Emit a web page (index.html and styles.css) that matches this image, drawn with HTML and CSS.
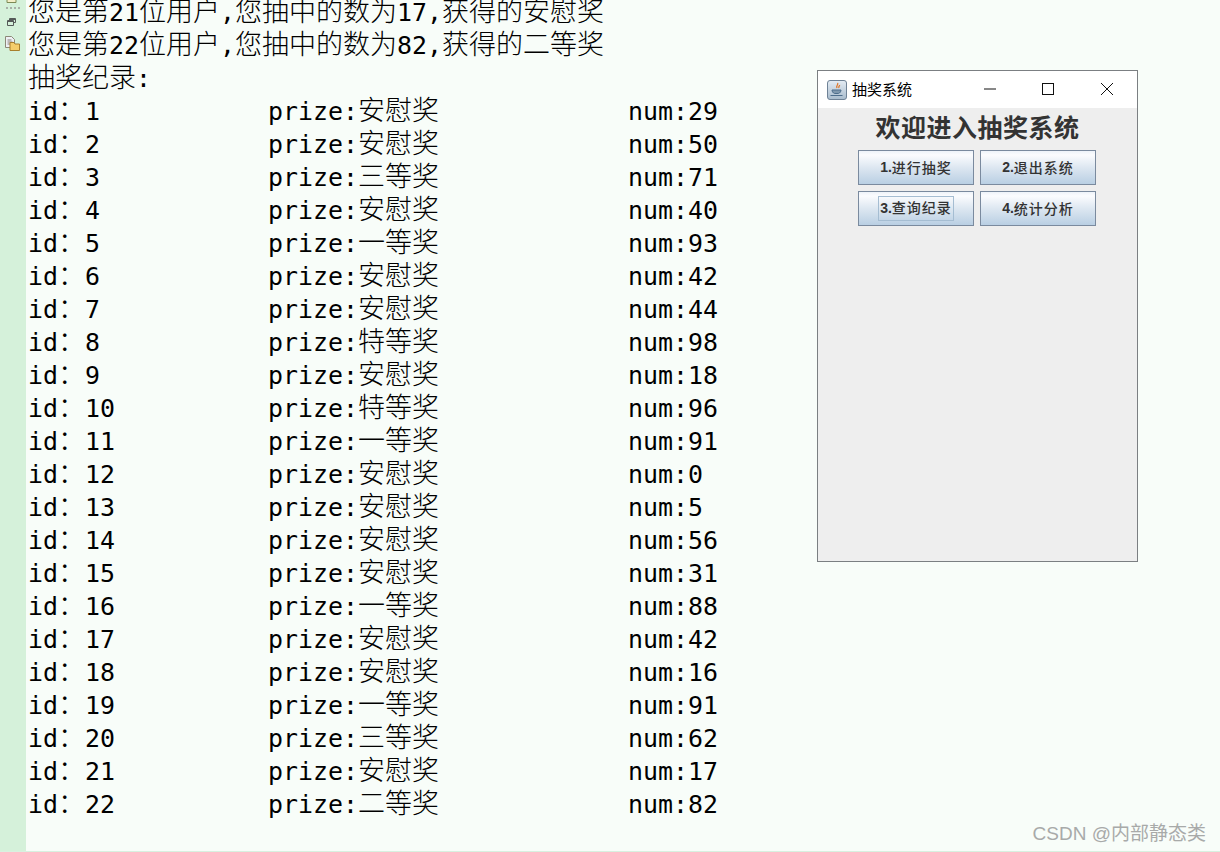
FILE: index.html
```html
<!DOCTYPE html>
<html lang="zh-CN">
<head>
<meta charset="utf-8">
<title>抽奖系统</title>
<link rel="stylesheet" href="styles.css">
</head>
<body>
<div class="page">
  <aside class="gutter">
    <svg class="gicon top" width="14" height="4" viewBox="0 0 14 4"><path d="M2 0v2.500h9V0" fill="#f3efc8" stroke="#7d8a55"/></svg>
    <div class="dots"></div>
    <svg class="gicon restore" width="9" height="8" viewBox="0 0 9 8"><path d="M2.500 2V.5h6v4H6.500M.5 2.500h6v5h-6zM.5 3.500h6M2.500 1.500h6" fill="none" stroke="#555a58"/></svg>
    <svg class="gicon docs" width="15" height="15" viewBox="0 0 15 15"><path d="M.5.5h6l3 3v8h-9z" fill="#eef0f4" stroke="#8c8878"/><path d="M2.500 4h4M2.500 6h5M2.500 8h5" stroke="#8a7e7a"/><path d="M5 6.500h4l1 1.500h4.500v6.500H5z" fill="#f4cd6a" stroke="#a87f2c"/></svg>
  </aside>
  <main class="console">
    <div class="line"><span class="cjk">您是第</span>21<span class="cjk">位用户</span>,<span class="cjk">您抽中的数为</span>17,<span class="cjk">获得的安慰奖</span></div>
    <div class="line"><span class="cjk">您是第</span>22<span class="cjk">位用户</span>,<span class="cjk">您抽中的数为</span>82,<span class="cjk">获得的二等奖</span></div>
    <div class="line"><span class="cjk">抽奖纪录</span>:</div>
    <div class="row"><span>id<span class="cjk">：</span>1</span><span>prize:<span class="cjk">安慰奖</span></span><span>num:29</span></div>
    <div class="row"><span>id<span class="cjk">：</span>2</span><span>prize:<span class="cjk">安慰奖</span></span><span>num:50</span></div>
    <div class="row"><span>id<span class="cjk">：</span>3</span><span>prize:<span class="cjk">三等奖</span></span><span>num:71</span></div>
    <div class="row"><span>id<span class="cjk">：</span>4</span><span>prize:<span class="cjk">安慰奖</span></span><span>num:40</span></div>
    <div class="row"><span>id<span class="cjk">：</span>5</span><span>prize:<span class="cjk">一等奖</span></span><span>num:93</span></div>
    <div class="row"><span>id<span class="cjk">：</span>6</span><span>prize:<span class="cjk">安慰奖</span></span><span>num:42</span></div>
    <div class="row"><span>id<span class="cjk">：</span>7</span><span>prize:<span class="cjk">安慰奖</span></span><span>num:44</span></div>
    <div class="row"><span>id<span class="cjk">：</span>8</span><span>prize:<span class="cjk">特等奖</span></span><span>num:98</span></div>
    <div class="row"><span>id<span class="cjk">：</span>9</span><span>prize:<span class="cjk">安慰奖</span></span><span>num:18</span></div>
    <div class="row"><span>id<span class="cjk">：</span>10</span><span>prize:<span class="cjk">特等奖</span></span><span>num:96</span></div>
    <div class="row"><span>id<span class="cjk">：</span>11</span><span>prize:<span class="cjk">一等奖</span></span><span>num:91</span></div>
    <div class="row"><span>id<span class="cjk">：</span>12</span><span>prize:<span class="cjk">安慰奖</span></span><span>num:0</span></div>
    <div class="row"><span>id<span class="cjk">：</span>13</span><span>prize:<span class="cjk">安慰奖</span></span><span>num:5</span></div>
    <div class="row"><span>id<span class="cjk">：</span>14</span><span>prize:<span class="cjk">安慰奖</span></span><span>num:56</span></div>
    <div class="row"><span>id<span class="cjk">：</span>15</span><span>prize:<span class="cjk">安慰奖</span></span><span>num:31</span></div>
    <div class="row"><span>id<span class="cjk">：</span>16</span><span>prize:<span class="cjk">一等奖</span></span><span>num:88</span></div>
    <div class="row"><span>id<span class="cjk">：</span>17</span><span>prize:<span class="cjk">安慰奖</span></span><span>num:42</span></div>
    <div class="row"><span>id<span class="cjk">：</span>18</span><span>prize:<span class="cjk">安慰奖</span></span><span>num:16</span></div>
    <div class="row"><span>id<span class="cjk">：</span>19</span><span>prize:<span class="cjk">一等奖</span></span><span>num:91</span></div>
    <div class="row"><span>id<span class="cjk">：</span>20</span><span>prize:<span class="cjk">三等奖</span></span><span>num:62</span></div>
    <div class="row"><span>id<span class="cjk">：</span>21</span><span>prize:<span class="cjk">安慰奖</span></span><span>num:17</span></div>
    <div class="row"><span>id<span class="cjk">：</span>22</span><span>prize:<span class="cjk">二等奖</span></span><span>num:82</span></div>
  </main>
</div>

<section class="window">
  <header class="titlebar">
    <svg class="appicon" width="20" height="20" viewBox="0 0 20 20">
      <defs><linearGradient id="ig" x1="0" y1="0" x2="0" y2="1"><stop offset="0" stop-color="#e4ecf4"/><stop offset="1" stop-color="#a9bccd"/></linearGradient></defs>
      <rect x=".5" y=".5" width="19" height="19" rx="2.500" fill="url(#ig)" stroke="#6f8296"/>
      <path d="M10.500 3c1.500 1.500-2 2.500-.5 5M12.500 5c.5 1-1.500 1.500-.5 3" fill="none" stroke="#e0772a" stroke-width="1.300"/>
      <path d="M5 10h9c0 1.500-1 3-2.500 3.500h-4C6 13 5 11.500 5 10zM3.500 15.500h12" fill="#7e97ad" stroke="#4d6d8b"/>
    </svg>
    <span class="wtitle">抽奖系统</span>
    <div class="controls">
      <svg width="12" height="12" viewBox="0 0 12 12"><path d="M0 6h12" stroke="#111"/></svg>
      <svg width="12" height="12" viewBox="0 0 12 12"><rect x=".5" y=".5" width="11" height="11" fill="none" stroke="#111"/></svg>
      <svg width="12" height="12" viewBox="0 0 12 12"><path d="M0 0l12 12M12 0L0 12" stroke="#111"/></svg>
    </div>
  </header>
  <div class="wbody">
    <h1 class="welcome">欢迎进入抽奖系统</h1>
    <div class="buttons">
      <button class="btn"><span class="num">1.</span>进行抽奖</button>
      <button class="btn"><span class="num">2.</span>退出系统</button>
      <button class="btn"><span class="focus"><span class="num">3.</span>查询纪录</span></button>
      <button class="btn"><span class="num">4.</span>统计分析</button>
    </div>
  </div>
</section>

<div class="watermark">CSDN @内部静态类</div>
</body>
</html>
```
FILE: styles.css
```css
html, body {
  margin: 0;
  padding: 0;
  height: 852px;
  overflow: hidden;
  background: #f8fdf9;
}
.page {
  display: flex;
  height: 851px;
  overflow: hidden;
  border-bottom: 1px solid #d8f1e0;
}
.gutter {
  width: 26px;
  flex: none;
  background: #d5f1da;
  display: flex;
  flex-direction: column;
  align-items: center;
}
.gicon { display: block; }
.top { margin-right: 2px; }
.dots {
  width: 14px;
  height: 0;
  margin-top: 3px;
  border-top: 2px dotted #a8b0a8;
}
.restore { margin-top: 9px; margin-right: 4px; }
.docs { margin-top: 10px; margin-right: 2px; }
.console {
  flex: 1;
  margin-top: -4px;
  padding-left: 2px;
  font-family: "DejaVu Sans Mono", "Liberation Mono", "Noto Sans CJK SC", monospace;
  font-size: 24.9px;
  line-height: 33px;
  color: #000;
}
.cjk {
  font-family: "Noto Sans CJK SC", sans-serif;
  font-size: 27px;
  line-height: 1;
  font-weight: 300;
}
.line, .row { height: 33px; white-space: nowrap; }
.row {
  display: grid;
  grid-template-columns: 240px 360px 1fr;
  align-items: baseline;
}
.window {
  position: absolute;
  left: 817px;
  top: 70px;
  width: 321px;
  height: 492px;
  box-sizing: border-box;
  border: 1px solid #7b7f82;
  background: #eeeeee;
  display: flex;
  flex-direction: column;
}
.titlebar {
  height: 37px;
  flex: none;
  background: #fff;
  display: flex;
  align-items: center;
  padding-left: 9px;
  font-family: "Noto Sans CJK SC", sans-serif;
}
.appicon { flex: none; }
.wtitle {
  margin: -2px 0 0 5px;
  font-size: 15px;
  color: #000;
}
.controls {
  margin-left: auto;
  display: flex;
  gap: 47px;
  margin-right: 24px;
  margin-top: -2px;
}
.controls svg { display: block; }
.controls svg:first-child { margin-right: -1px; }
.wbody {
  flex: 1;
  display: flex;
  flex-direction: column;
  align-items: center;
}
.welcome {
  margin: 2px 0 0;
  font-family: "Noto Sans CJK SC", sans-serif;
  font-size: 25px;
  letter-spacing: .5px;
  line-height: 32px;
  font-weight: 700;
  color: #333;
}
.buttons {
  margin-top: 8px;
  margin-right: 1px;
  display: grid;
  grid-template-columns: 116px 116px;
  grid-auto-rows: 35px;
  gap: 6px;
}
.btn {
  margin: 0;
  padding: 0 0 2px;
  border: 1px solid #7a8a9e;
  background: linear-gradient(#eef3f9 0%, #fbfcfe 12%, #dde7f1 50%, #b9cfe3 100%);
  font-family: "Noto Sans CJK SC", sans-serif;
  font-size: 14px;
  letter-spacing: 1px;
  font-weight: 500;
  color: #333;
  display: flex;
  align-items: center;
  justify-content: center;
}
.num {
  font-family: "Liberation Sans", sans-serif;
  font-weight: 700;
  font-size: 14px;
  letter-spacing: 0;
}
.focus {
  border: 1px solid #a5bdd2;
  height: 23px;
  line-height: 20px;
  width: 74px;
  margin-bottom: -2px;
  white-space: nowrap;
}
.watermark {
  position: absolute;
  right: 14px;
  top: 822px;
  font-family: "Liberation Sans", "Noto Sans CJK SC", sans-serif;
  font-size: 19px;
  line-height: 24px;
  color: #a8aaa9;
}
```
